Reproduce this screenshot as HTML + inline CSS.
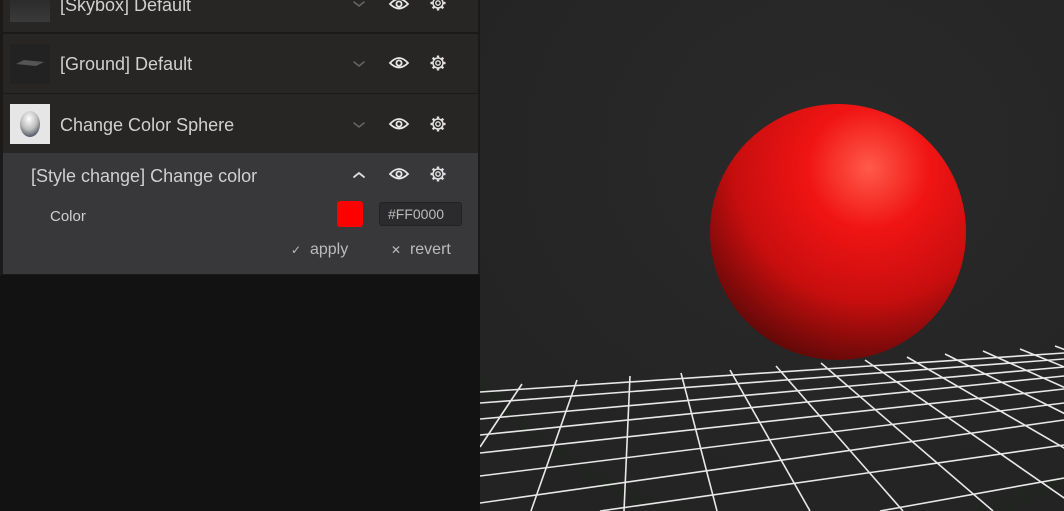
<!DOCTYPE html>
<html><head><style>
*{margin:0;padding:0;box-sizing:border-box}
body{width:1064px;height:511px;overflow:hidden;background:#121212;font-family:"Liberation Sans","DejaVu Sans",sans-serif;position:relative}
.panel{position:absolute;left:0;top:0;width:480px;height:275px;background:#1a1a1a}
.row{position:absolute;left:3px;width:475px;background:#272624;color:#d0d0d0;font-size:18px}
.row .t{position:absolute;left:57px}
.thumb{position:absolute;left:7px;width:40px;height:40px}
.ic{position:absolute}
</style></head><body>
<div class="panel">
  <div class="row" style="top:0;height:32px">
    <div class="thumb" style="top:-18px;background:linear-gradient(#202020,#3a3a3a)"></div>
    <div class="t" style="top:-5px">[Skybox] Default</div>
  </div>
  <div class="row" style="top:34px;height:59px">
    <div class="thumb" style="top:10px;background:#222"><svg width="40" height="40"><polygon points="6,20 14,16 34,18 26,22" fill="#555"/></svg></div>
    <div class="t" style="top:20px">[Ground] Default</div>
  </div>
  <div class="row" style="top:94px;height:59px">
    <div class="thumb" style="top:10px;background:#e6e6e6"><svg width="40" height="40"><defs><radialGradient id="g" cx="0.45" cy="0.3" r="0.7"><stop offset="0" stop-color="#fff"/><stop offset="0.6" stop-color="#bbb"/><stop offset="1" stop-color="#556"/></radialGradient></defs><ellipse cx="20" cy="20" rx="10" ry="13" fill="url(#g)"/></svg></div>
    <div class="t" style="top:21px">Change Color Sphere</div>
  </div>
  <div class="row" style="top:153px;height:121px;background:#38383b">
    <div style="position:absolute;left:28px;top:13px">[Style change] Change color</div>
    <div style="position:absolute;left:47px;top:55px;font-size:15px">Color</div>
    <div style="position:absolute;left:334px;top:48px;width:26px;height:26px;background:#f00;border-radius:3px"></div>
    <div style="position:absolute;left:376px;top:49px;width:83px;height:24px;background:#2b2b2d;border:1px solid #222;border-radius:3px;color:#bbb;font-size:14px;padding:3px 0 0 8px">#FF0000</div>
    <div style="position:absolute;left:288px;top:88px;font-size:16px;color:#bbb"><span style="font-size:12px">✓</span>&nbsp;&nbsp;apply</div>
    <div style="position:absolute;left:388px;top:88px;font-size:16px;color:#bbb"><span style="font-size:12px">✕</span>&nbsp;&nbsp;revert</div>
  </div>
</div>
<svg class="ic" style="left:0;top:0" width="480" height="275">
  <defs>
    <g id="gear" fill="none" stroke="#e0e0e0">
      <circle r="5" stroke-width="1.5"/>
      <circle r="2.2" stroke-width="1.4"/>
      <g stroke-width="2.4">
        <line x1="0" y1="-5" x2="0" y2="-7.5"/><line x1="0" y1="5" x2="0" y2="7.5"/>
        <line x1="-5" y1="0" x2="-7.5" y2="0"/><line x1="5" y1="0" x2="7.5" y2="0"/>
        <line x1="3.5" y1="3.5" x2="5.3" y2="5.3"/><line x1="-3.5" y1="-3.5" x2="-5.3" y2="-5.3"/>
        <line x1="3.5" y1="-3.5" x2="5.3" y2="-5.3"/><line x1="-3.5" y1="3.5" x2="-5.3" y2="5.3"/>
      </g>
    </g>
  </defs>
  <g fill="none" stroke-linecap="round" stroke-linejoin="round">
    <polyline points="354,2 359,6 364,2" stroke="#666" stroke-width="1.5"/>
    <polyline points="354,62 359,66 364,62" stroke="#666" stroke-width="1.5"/>
    <polyline points="354,123 359,127 364,123" stroke="#666" stroke-width="1.5"/>
    <polyline points="354,177 359,173 364,177" stroke="#ddd" stroke-width="1.8"/>
  </g>
  <g fill="none" stroke="#e8e8e8" stroke-width="1.8">
    <path d="M390,4 Q399,-6 408,4 Q399,13 390,4Z"/><circle cx="399" cy="4" r="2.6"/>
    <path d="M390,63 Q399,53 408,63 Q399,72 390,63Z"/><circle cx="399" cy="63" r="2.6"/>
    <path d="M390,124 Q399,114 408,124 Q399,133 390,124Z"/><circle cx="399" cy="124" r="2.6"/>
    <path d="M390,174 Q399,164 408,174 Q399,183 390,174Z"/><circle cx="399" cy="174" r="2.6"/>
  </g>
  <use href="#gear" x="438" y="3"/>
  <use href="#gear" x="438" y="63"/>
  <use href="#gear" x="438" y="124"/>
  <use href="#gear" x="438" y="174"/>
</svg>
<svg style="position:absolute;left:480px;top:0" width="584" height="511" viewBox="480 0 584 511">
  <defs>
    <radialGradient id="bg" cx="0.6" cy="0.3" r="0.8"><stop offset="0" stop-color="#2a2a2a"/><stop offset="1" stop-color="#222322"/></radialGradient>
    <radialGradient id="sp" cx="0.62" cy="0.25" r="0.8"><stop offset="0" stop-color="#ff5a4a"/><stop offset="0.3" stop-color="#f01414"/><stop offset="0.65" stop-color="#c80e0e"/><stop offset="1" stop-color="#5a0808"/></radialGradient>
  </defs>
  <rect x="480" y="0" width="584" height="511" fill="url(#bg)"/>
  <circle cx="838" cy="232" r="128" fill="url(#sp)"/>
  <g stroke="#e8e8e8" stroke-width="1.6">
    <line x1="522" y1="384" x2="480" y2="447"/>
    <line x1="577" y1="380" x2="531" y2="511"/>
    <line x1="630" y1="376" x2="624" y2="511"/>
    <line x1="681" y1="373" x2="717" y2="511"/>
    <line x1="730" y1="370" x2="810" y2="511"/>
    <line x1="776" y1="366" x2="903" y2="511"/>
    <line x1="821" y1="363" x2="993" y2="511"/>
    <line x1="865" y1="360" x2="1083" y2="511"/>
    <line x1="907" y1="357" x2="1173" y2="511"/>
    <line x1="945" y1="354" x2="1260" y2="511"/>
    <line x1="983" y1="351" x2="1340" y2="511"/>
    <line x1="1020" y1="349" x2="1420" y2="511"/>
    <line x1="1055" y1="346" x2="1500" y2="511"/>
    <line x1="480" y1="392" x2="1064" y2="353"/>
    <line x1="480" y1="403" x2="1064" y2="359"/>
    <line x1="480" y1="419" x2="1064" y2="367"/>
    <line x1="480" y1="435" x2="1064" y2="376"/>
    <line x1="480" y1="453" x2="1064" y2="389"/>
    <line x1="480" y1="476" x2="1064" y2="403"/>
    <line x1="480" y1="503" x2="1064" y2="420"/>
    <line x1="600" y1="511" x2="1064" y2="445"/>
    <line x1="880" y1="511" x2="1064" y2="478"/>
  </g>
</svg>
</body></html>
